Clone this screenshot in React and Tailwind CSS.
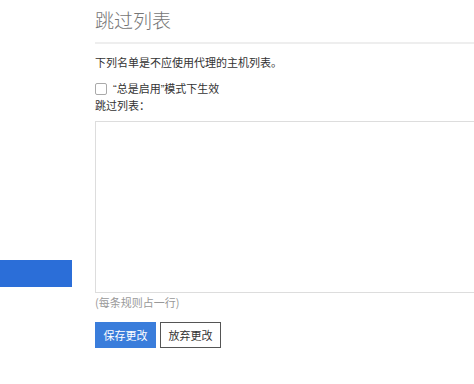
import React from "react";

const Quote = ({ children }) => (
  <span style={{ fontFamily: '"Liberation Sans", sans-serif' }}>{children}</span>
);

const App = () => {
  return (
    <div
      className="flex w-[474px] h-[384px] overflow-hidden bg-white text-[#333]"
      style={{ fontFamily: '"Noto Sans CJK SC", "Liberation Sans", sans-serif' }}
    >
      {/* Sidebar */}
      <div className="w-[72px] shrink-0 flex flex-col">
        <div className="mt-[260px] h-[27px] bg-[#2b6ed8]" />
      </div>

      {/* Main */}
      <div className="ml-[23px] flex flex-col shrink-0 w-[400px]">
        <h1 className="pt-[5px] text-[19px] leading-[30px] font-light text-[#767676]">
          跳过列表
        </h1>
        <div className="mt-[7px] h-[2px] bg-[#eeeeee]" />

        <p className="mt-[10px] text-[11px] leading-[16px] text-[#333]">
          下列名单是不应使用代理的主机列表。
        </p>

        <label className="mt-[11px] flex items-center h-[16px] text-[11px] text-[#333]">
          <span className="w-[12px] h-[12px] border border-[#aaa] rounded-[2px] bg-white" />
          <span className="ml-[6px]">
            <Quote>“</Quote>总是启用<Quote>”</Quote>模式下生效
          </span>
        </label>
        <div className="text-[11px] leading-[16px] text-[#333]">跳过列表：</div>

        <textarea className="mt-[8px] h-[172px] w-full border border-[#dddddd] resize-none outline-none" />

        <div className="mt-[1px] text-[11px] leading-[16px] text-[#999]">
          (每条规则占一行)
        </div>

        <div className="mt-[12px] flex gap-[4px]">
          <button className="h-[26px] w-[61px] bg-[#3a7ddb] text-white text-[11px]">
            保存更改
          </button>
          <button className="h-[26px] w-[61px] border border-[#555] bg-white text-[#333] text-[11px]">
            放弃更改
          </button>
        </div>
      </div>
    </div>
  );
};

export default App;
